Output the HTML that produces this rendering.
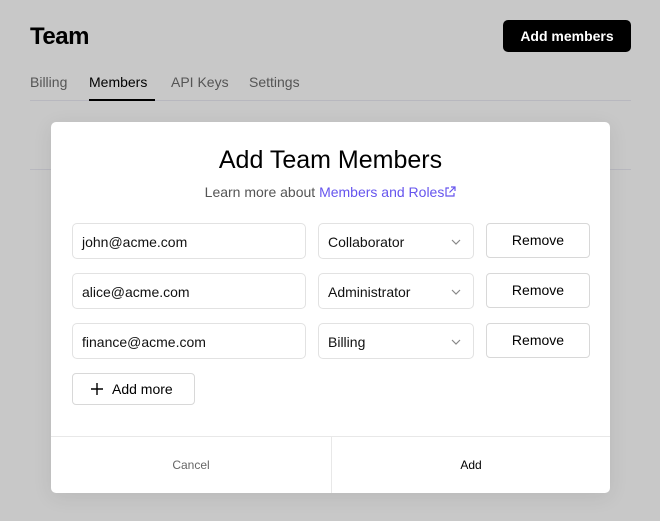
<!DOCTYPE html>
<html><head><style>
*{box-sizing:border-box;margin:0;padding:0}
body{width:660px;height:521px;background:#c8c8c8;font-family:"Liberation Sans",sans-serif;position:relative;overflow:hidden;color:#111}
.abs{position:absolute}
h1{position:absolute;left:30px;top:23px;font-size:24px;font-weight:bold;letter-spacing:-0.5px;color:#000}
.btn{position:absolute;left:503px;top:20px;width:128px;height:32px;background:#000;color:#fff;border-radius:5px;font-size:14px;font-weight:bold;text-align:center;line-height:32px}
.tab{position:absolute;top:74px;font-size:14px;color:#555}
.modal{position:absolute;left:51px;top:122px;width:559px;height:371px;background:#fff;border-radius:5px;box-shadow:0 4px 20px rgba(0,0,0,.08)}
.in{position:absolute;height:36px;border:1px solid #e2e2e2;border-radius:5px;font-size:14px;line-height:36px;padding-left:9px;color:#111}
.rm{position:absolute;left:435px;width:104px;height:35px;border:1px solid #d8d8d8;border-radius:4px;font-size:14px;text-align:center;line-height:33px;color:#000}
.chev{position:absolute;right:12px;top:15px}
</style></head><body>
<h1>Team</h1>
<div class="btn">Add members</div>
<div class="tab" style="left:30px">Billing</div>
<div class="tab" style="left:89px;color:#000">Members</div>
<div class="tab" style="left:171px">API Keys</div>
<div class="tab" style="left:249px">Settings</div>
<div class="abs" style="left:30px;top:100px;width:601px;height:1px;background:#b8b8bf"></div>
<div class="abs" style="left:89px;top:99px;width:66px;height:2px;background:#000"></div>
<div class="abs" style="left:30px;top:169px;width:601px;height:1px;background:#b8b8bf"></div>
<div class="modal">
<div class="abs" style="left:0;width:559px;top:24px;text-align:center;font-size:25px;color:#000">Add Team Members</div>
<div class="abs" style="left:0;width:559px;top:62px;text-align:center;font-size:14px;color:#555">Learn more about <span style="color:#6655ee">Members and Roles<svg width="12" height="12" viewBox="0 0 12 12" style="vertical-align:-1px"><path d="M5 2H2v8h8V7M7 1h4v4M11 1L5.5 6.5" fill="none" stroke="#6655ee" stroke-width="1.2"/></svg></span></div>

<div class="in" style="left:21px;top:101px;width:234px">john@acme.com</div>
<div class="in" style="left:267px;top:101px;width:156px">Collaborator<svg class="chev" width="10" height="6"><path d="M1 1l4 4 4-4" fill="none" stroke="#888" stroke-width="1.2"/></svg></div>
<div class="rm" style="top:101px">Remove</div>

<div class="in" style="left:21px;top:151px;width:234px">alice@acme.com</div>
<div class="in" style="left:267px;top:151px;width:156px">Administrator<svg class="chev" width="10" height="6"><path d="M1 1l4 4 4-4" fill="none" stroke="#888" stroke-width="1.2"/></svg></div>
<div class="rm" style="top:151px">Remove</div>

<div class="in" style="left:21px;top:201px;width:234px">finance@acme.com</div>
<div class="in" style="left:267px;top:201px;width:156px">Billing<svg class="chev" width="10" height="6"><path d="M1 1l4 4 4-4" fill="none" stroke="#888" stroke-width="1.2"/></svg></div>
<div class="rm" style="top:201px">Remove</div>

<div class="abs" style="left:21px;top:251px;width:123px;height:32px;border:1px solid #d8d8d8;border-radius:4px;font-size:14px;line-height:30px;color:#000;padding-left:18px"><svg width="12" height="12" style="vertical-align:-1px;margin-right:9px"><path d="M6 0v12M0 6h12" stroke="#000" stroke-width="1.4"/></svg>Add more</div>

<div class="abs" style="left:0;top:314px;width:559px;height:1px;background:#e8e8e8"></div>
<div class="abs" style="left:280px;top:315px;width:1px;height:56px;background:#e8e8e8"></div>
<div class="abs" style="left:0;width:280px;top:336px;text-align:center;font-size:12px;color:#666">Cancel</div>
<div class="abs" style="left:281px;width:278px;top:336px;text-align:center;font-size:12px;color:#000">Add</div>
</div>
</body></html>
